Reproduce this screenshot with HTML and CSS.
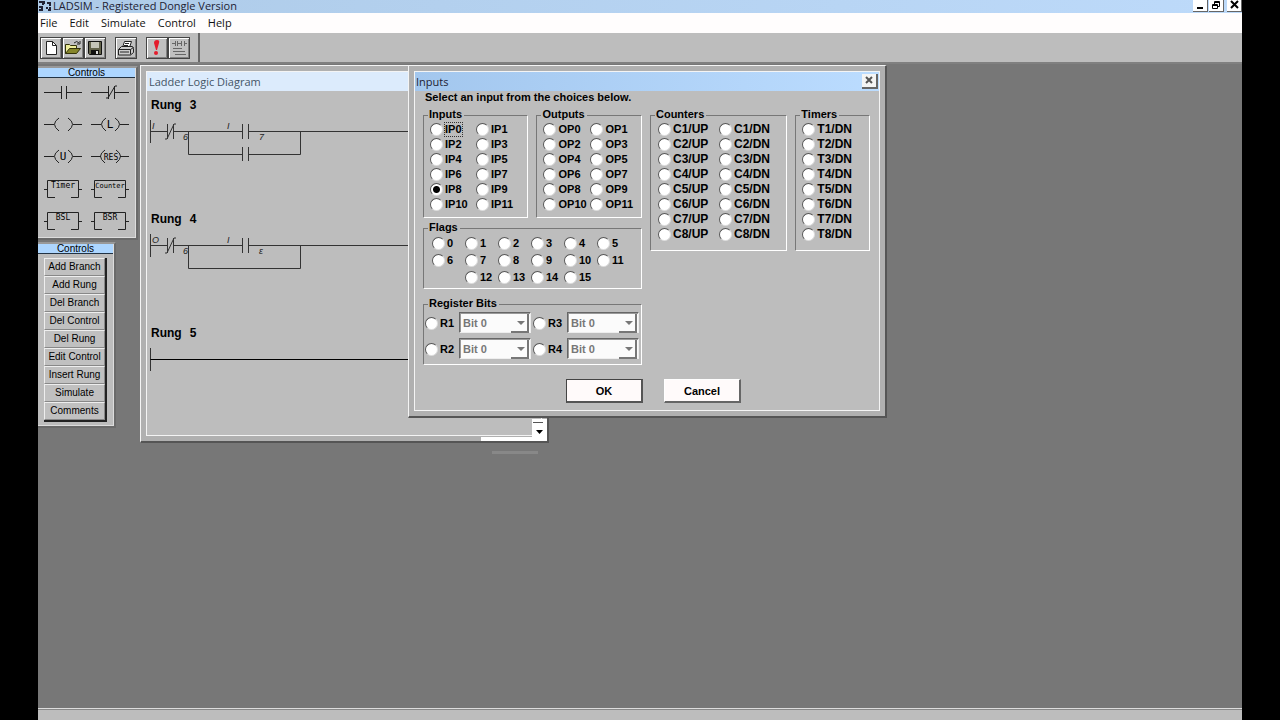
FILE: index.html
```html
<!DOCTYPE html>
<html lang="en">

  <head>
    <meta charset="UTF-8">
    <title>LADSIM - Registered Dongle Version</title>
    <link rel="stylesheet" href="styles.css">
  </head>

  <body>
    <header class="titlebar">
      <svg class="appIcon" width="14" height="12" viewBox="0 0 14 12"><path d="M1 2h4v3M1 7h3v3H1M9 3h3v3M8 8h2M12 7v3h-2M6 1v3" fill="none" stroke="#223" stroke-width="2"/></svg>
      <span class="appTitle">LADSIM - Registered Dongle Version</span>
      <div class="winButtons">
	<button type="button" aria-label="Minimize"><svg width="15" height="11" viewBox="0 2 15 11"><path d="M4 10h6" stroke="#000" stroke-width="2"/></svg></button>
	<button type="button" aria-label="Restore"><svg width="15" height="11" viewBox="0 2 15 11"><path d="M5.500 6V3.500h5v5H9M3.500 6.500h5v4h-5zM5 4.500h6M3 7.500h6" fill="none" stroke="#000"/></svg></button>
	<button type="button" class="closeApp" aria-label="Close"><svg width="15" height="11" viewBox="0 2 15 11"><path d="M4 3l7 7M11 3l-7 7" stroke="#000" stroke-width="2"/></svg></button>
      </div>
    </header>
    <nav class="menubar">
      <a href="#">File</a><a href="#">Edit</a><a href="#">Simulate</a><a href="#">Control</a><a href="#">Help</a>
    </nav>
    <div class="toolbar">
      <div class="tools">
	<button type="button" aria-label="New"><svg width="18" height="18" viewBox="0 0 18 18"><path d="M4.500 2.500h6l4 4v9h-10z" fill="#fff" stroke="#222"/><path d="M10.500 2.500v4h4" fill="none" stroke="#222"/></svg></button>
	<button type="button" aria-label="Open"><svg width="18" height="18" viewBox="0 0 18 18"><path d="M1.500 14.500v-9h4l1 1h6v3" fill="#eded9a" stroke="#33330a"/><path d="M1.500 14.500l4-5h11l-4 5z" fill="#85852a" stroke="#33330a"/><path d="M10 4q3-3 5 0M16 2v3h-3" fill="none" stroke="#222"/></svg></button>
	<button type="button" aria-label="Save"><svg width="18" height="18" viewBox="0 0 18 18"><path d="M2.500 2.500h13v13h-12l-1-1z" fill="#62624a" stroke="#111"/><path d="M5 3h8v6H5z" fill="#c4c4b8"/><path d="M5 11h8v4H5z" fill="#111"/><path d="M10 12h2v3h-2z" fill="#ddd"/></svg></button>
	<button type="button" class="gap" aria-label="Print"><svg width="18" height="18" viewBox="0 0 18 18"><path d="M5.500 8.500l2-6h7l-2 6z" fill="#fff" stroke="#222"/><path d="M1.500 10.500l3-3h11l1 2v4l-3 2.500h-12z" fill="#ccc" stroke="#222"/><path d="M1.500 10.500h12v5M13.500 10.500l3-2M3 13h9M8 4.500h4M7 6.500h4" fill="none" stroke="#222"/></svg></button>
	<button type="button" class="gap" aria-label="Run"><svg width="18" height="18" viewBox="0 0 18 18"><path d="M6 4q0-3 3-3t2 3l-2 7H8z" fill="#e51c2c"/><circle cx="8" cy="14" r="2" fill="#e51c2c"/></svg></button>
	<button type="button" aria-label="Rung list"><svg width="18" height="18" viewBox="0 0 18 18"><path d="M2 4.500h3M5.500 2v5M7.500 2v5M8 4.500h3M11.500 2v5M14.500 2v5M15 4.500h2M3 9.500h9M3 12.500h12M5 15.500h11" fill="none" stroke="#666"/></svg></button>
      </div>
    </div>

    <main class="workspace">
      <section class="palette symbols">
	<h2 class="paletteTitle">Controls</h2>
	<div class="symbolGrid">
	  <button type="button" aria-label="Open contact"><svg width="40" height="28" viewBox="0 0 40 28"><path d="M1 14.500h17M23 14.500h16M18.500 8v13M23.500 8v13"/></svg></button>
	  <button type="button" aria-label="Closed contact"><svg width="40" height="28" viewBox="0 0 40 28"><path d="M1 14.500h17M24 14.500h15M18.500 8v13M24.500 8v13M16 20h2L25 8h2"/></svg></button>
	  <button type="button" aria-label="Coil"><svg width="40" height="28" viewBox="0 0 40 28"><path d="M1 14.500h10M30 14.500h9M16 8q-9 6 0 13M25 8q9 6 0 13"/></svg></button>
	  <button type="button" aria-label="Latch"><svg width="40" height="28" viewBox="0 0 40 28"><path d="M1 14.500h10M30 14.500h9M16 8q-9 6 0 13M25 8q9 6 0 13"/><text x="20" y="18" class="big">L</text></svg></button>
	  <button type="button" aria-label="Unlatch"><svg width="40" height="28" viewBox="0 0 40 28"><path d="M1 14.500h10M30 14.500h9M16 8q-9 6 0 13M25 8q9 6 0 13"/><text x="20" y="18" class="big">U</text></svg></button>
	  <button type="button" aria-label="Reset"><svg width="40" height="28" viewBox="0 0 40 28"><path d="M1 14.500h10M30 14.500h9M15 8q-9 6 0 13M26 8q9 6 0 13"/><text x="21" y="18">RES</text></svg></button>
	  <button type="button" aria-label="Timer"><svg width="40" height="28" viewBox="0 0 40 28"><path d="M12 23.500H4.500v-17h31v17H28M1 15.500h3M36 15.500h3"/><text x="20" y="14">Timer</text></svg></button>
	  <button type="button" aria-label="Counter"><svg width="40" height="28" viewBox="0 0 40 28"><path d="M12 23.500H4.500v-17h31v17H28M1 15.500h3M36 15.500h3"/><text x="20" y="14" class="narrow">Counter</text></svg></button>
	  <button type="button" aria-label="Shift left"><svg width="40" height="28" viewBox="0 0 40 28"><path d="M12 23.500H4.500v-17h31v17H28M1 15.500h3M36 15.500h3"/><text x="20" y="14">BSL</text></svg></button>
	  <button type="button" aria-label="Shift right"><svg width="40" height="28" viewBox="0 0 40 28"><path d="M12 23.500H4.500v-17h31v17H28M1 15.500h3M36 15.500h3"/><text x="20" y="14">BSR</text></svg></button>
	</div>
      </section>

      <section class="palette commands">
	<h2 class="paletteTitle">Controls</h2>
	<div class="commandList">
	  <button type="button">Add Branch</button>
	  <button type="button">Add Rung</button>
	  <button type="button">Del Branch</button>
	  <button type="button">Del Control</button>
	  <button type="button">Del Rung</button>
	  <button type="button">Edit Control</button>
	  <button type="button">Insert Rung</button>
	  <button type="button">Simulate</button>
	  <button type="button">Comments</button>
	</div>
      </section>

      <section class="window ladder">
	<div class="windowInner">
	  <h2 class="windowTitle pale">Ladder Logic Diagram</h2>
	  <div class="rungs">
	    <div class="rung">
	      <h3>Rung<span>3</span></h3>
	      <svg width="380" height="60" viewBox="0 0 380 60">
		<path d="M2.500 8v23M2.500 19.500h17M26 19.500h69M101 19.500h279M19.500 12v15M25.500 12v15M17 27h2l7-15h2M94.500 12v15M100.500 12v15M40.500 20v22.500h54M101 42.500h51.500V20M94.500 35v14M100.500 35v14"/>
		<text x="4" y="17">I</text><text x="35" y="28">6</text><text x="79" y="17">I</text><text x="111" y="28">7</text>
	      </svg>
	    </div>
	    <div class="rung">
	      <h3>Rung<span>4</span></h3>
	      <svg width="380" height="60" viewBox="0 0 380 60">
		<path d="M2.500 8v23M2.500 19.500h17M26 19.500h69M101 19.500h279M19.500 12v15M25.500 12v15M17 27h2l7-15h2M94.500 12v15M100.500 12v15M40.500 20v22.500h112V20"/>
		<text x="4" y="17">O</text><text x="35" y="28">6</text><text x="79" y="17">I</text><text x="111" y="28">&#949;</text>
	      </svg>
	    </div>
	    <div class="rung">
	      <h3>Rung<span>5</span></h3>
	      <svg width="380" height="60" viewBox="0 0 380 60"><path d="M2.500 8v23"/><path class="live" d="M2.500 19.500h378"/></svg>
	    </div>
	  </div>
	</div>
	<div class="scrollCorner"></div>
	<button type="button" class="scrollDown" aria-label="Scroll down"><svg width="15" height="20" viewBox="0 0 15 20"><path d="M1 3.500h10" stroke="#555"/><path d="M4 11h7l-3.500 4z" fill="#000"/></svg></button>
      </section>
      <div class="ghostBar"></div>

      <section class="window dialog">
	<div class="windowInner">
	  <h2 class="windowTitle">Inputs
	    <button type="button" class="closeDialog" aria-label="Close"><svg width="14" height="13" viewBox="0 0 14 13"><path d="M4 3l6 6M10 3l-6 6" stroke="#555" stroke-width="2"/></svg></button>
	  </h2>
	  <form class="dialogBody">
	    <p class="prompt">Select an input from the choices below.</p>
	    <div class="groups">
	      <div class="leftGroups">
		<div class="ioGroups">
		  <fieldset>
		    <legend>Inputs</legend>
		    <div class="choices inputs">
		      <label class="focused"><input type="radio" name="source"><span>IP0</span></label>
		      <label><input type="radio" name="source"><span>IP1</span></label>
		      <label><input type="radio" name="source"><span>IP2</span></label>
		      <label><input type="radio" name="source"><span>IP3</span></label>
		      <label><input type="radio" name="source"><span>IP4</span></label>
		      <label><input type="radio" name="source"><span>IP5</span></label>
		      <label><input type="radio" name="source"><span>IP6</span></label>
		      <label><input type="radio" name="source"><span>IP7</span></label>
		      <label><input type="radio" name="source" checked><span>IP8</span></label>
		      <label><input type="radio" name="source"><span>IP9</span></label>
		      <label><input type="radio" name="source"><span>IP10</span></label>
		      <label><input type="radio" name="source"><span>IP11</span></label>
		    </div>
		  </fieldset>
		  <fieldset>
		    <legend>Outputs</legend>
		    <div class="choices outputs">
		      <label><input type="radio" name="source"><span>OP0</span></label>
		      <label><input type="radio" name="source"><span>OP1</span></label>
		      <label><input type="radio" name="source"><span>OP2</span></label>
		      <label><input type="radio" name="source"><span>OP3</span></label>
		      <label><input type="radio" name="source"><span>OP4</span></label>
		      <label><input type="radio" name="source"><span>OP5</span></label>
		      <label><input type="radio" name="source"><span>OP6</span></label>
		      <label><input type="radio" name="source"><span>OP7</span></label>
		      <label><input type="radio" name="source"><span>OP8</span></label>
		      <label><input type="radio" name="source"><span>OP9</span></label>
		      <label><input type="radio" name="source"><span>OP10</span></label>
		      <label><input type="radio" name="source"><span>OP11</span></label>
		    </div>
		  </fieldset>
		</div>
		<fieldset class="flagGroup">
		  <legend>Flags</legend>
		  <div class="choices flags">
		    <label><input type="radio" name="source"><span>0</span></label>
		    <label><input type="radio" name="source"><span>1</span></label>
		    <label><input type="radio" name="source"><span>2</span></label>
		    <label><input type="radio" name="source"><span>3</span></label>
		    <label><input type="radio" name="source"><span>4</span></label>
		    <label><input type="radio" name="source"><span>5</span></label>
		    <label><input type="radio" name="source"><span>6</span></label>
		    <label><input type="radio" name="source"><span>7</span></label>
		    <label><input type="radio" name="source"><span>8</span></label>
		    <label><input type="radio" name="source"><span>9</span></label>
		    <label><input type="radio" name="source"><span>10</span></label>
		    <label><input type="radio" name="source"><span>11</span></label>
		    <label class="lastRow"><input type="radio" name="source"><span>12</span></label>
		    <label><input type="radio" name="source"><span>13</span></label>
		    <label><input type="radio" name="source"><span>14</span></label>
		    <label><input type="radio" name="source"><span>15</span></label>
		  </div>
		</fieldset>
		<fieldset class="registerGroup">
		  <legend>Register Bits</legend>
		  <div class="registers">
		    <label><input type="radio" name="source"><span>R1</span></label>
		    <div class="combo"><select disabled aria-label="R1 bit"><option>Bit 0</option></select></div>
		    <label><input type="radio" name="source"><span>R3</span></label>
		    <div class="combo"><select disabled aria-label="R3 bit"><option>Bit 0</option></select></div>
		    <label><input type="radio" name="source"><span>R2</span></label>
		    <div class="combo"><select disabled aria-label="R2 bit"><option>Bit 0</option></select></div>
		    <label><input type="radio" name="source"><span>R4</span></label>
		    <div class="combo"><select disabled aria-label="R4 bit"><option>Bit 0</option></select></div>
		  </div>
		</fieldset>
	      </div>
	      <fieldset>
		<legend>Counters</legend>
		<div class="choices counters">
		  <label><input type="radio" name="source"><span>C1/UP</span></label>
		  <label><input type="radio" name="source"><span>C1/DN</span></label>
		  <label><input type="radio" name="source"><span>C2/UP</span></label>
		  <label><input type="radio" name="source"><span>C2/DN</span></label>
		  <label><input type="radio" name="source"><span>C3/UP</span></label>
		  <label><input type="radio" name="source"><span>C3/DN</span></label>
		  <label><input type="radio" name="source"><span>C4/UP</span></label>
		  <label><input type="radio" name="source"><span>C4/DN</span></label>
		  <label><input type="radio" name="source"><span>C5/UP</span></label>
		  <label><input type="radio" name="source"><span>C5/DN</span></label>
		  <label><input type="radio" name="source"><span>C6/UP</span></label>
		  <label><input type="radio" name="source"><span>C6/DN</span></label>
		  <label><input type="radio" name="source"><span>C7/UP</span></label>
		  <label><input type="radio" name="source"><span>C7/DN</span></label>
		  <label><input type="radio" name="source"><span>C8/UP</span></label>
		  <label><input type="radio" name="source"><span>C8/DN</span></label>
		</div>
	      </fieldset>
	      <fieldset>
		<legend>Timers</legend>
		<div class="choices timers">
		  <label><input type="radio" name="source"><span>T1/DN</span></label>
		  <label><input type="radio" name="source"><span>T2/DN</span></label>
		  <label><input type="radio" name="source"><span>T3/DN</span></label>
		  <label><input type="radio" name="source"><span>T4/DN</span></label>
		  <label><input type="radio" name="source"><span>T5/DN</span></label>
		  <label><input type="radio" name="source"><span>T6/DN</span></label>
		  <label><input type="radio" name="source"><span>T7/DN</span></label>
		  <label><input type="radio" name="source"><span>T8/DN</span></label>
		</div>
	      </fieldset>
	    </div>
	    <div class="dialogButtons">
	      <button type="button" class="default">OK</button>
	      <button type="button">Cancel</button>
	    </div>
	  </form>
	</div>
      </section>
    </main>
    <footer class="statusbar"></footer>
  </body>

</html>
```
FILE: styles.css
```css
* {
    box-sizing: border-box;
}
html {
    background-color: #000;
}
body {
    display: flex;
    flex-direction: column;
    height: 100vh;
    margin: 0 38px;
    background-color: #777;
    color: #000;
    font-family: "Liberation Sans", Arial, sans-serif;
    font-size: 11px;
    overflow: hidden;
}
h2, h3, p {
    margin: 0;
}
button {
    padding: 0;
    border: 0;
    background: none;
    color: inherit;
    font: inherit;
}
svg {
    display: block;
}

/* application frame */
.titlebar {
    display: flex;
    align-items: flex-start;
    height: 13px;
    background: linear-gradient(90deg, #aecbe8, #bddafa);
}
.appIcon {
    margin-right: 1px;
}
.appTitle {
    color: #223;
    font: 11px/11px "Open Sans", sans-serif;
}
.winButtons {
    display: flex;
    gap: 1px;
    margin-left: auto;
}
.winButtons button {
    width: 15px;
    background-color: #fff;
    border-right: 1px solid #666;
    border-bottom: 1px solid #666;
}
.winButtons .closeApp {
    margin-left: 2px;
}
.menubar {
    display: flex;
    gap: 12px;
    height: 20px;
    padding-left: 2px;
    background-color: #fffdfd;
    font: 11px/19px "Open Sans", sans-serif;
}
.menubar a {
    color: #111;
    text-decoration: none;
}
.toolbar {
    height: 31px;
    background-color: #bdbdbd;
    border-bottom: 2px solid #808080;
}
.tools {
    display: flex;
    align-items: center;
    width: 162px;
    height: 29px;
    padding-left: 2px;
    border-right: 2px solid #666;
}
.tools button {
    width: 22px;
    height: 22px;
    padding: 1px;
    background-color: #c0c0c0;
    border: 1px solid #444;
    box-shadow: inset 1px 1px #fff, inset -1px -1px #808080;
}
.tools .gap {
    margin-left: 9px;
}
.workspace {
    position: relative;
    flex: 1;
    overflow: hidden;
}
.statusbar {
    height: 12px;
    background-color: #bdbdbd;
    border-top: 1px solid #ddd;
    box-shadow: inset 0 1px #888;
}

/* floating palettes */
.palette {
    position: absolute;
    left: 0;
    background-color: #bdbdbd;
    border: 2px solid #6a6a6a;
    border-top-color: #999;
    border-left: 0;
    box-shadow: inset -1px -1px #ddd;
}
.symbols {
    top: 2px;
    width: 100px;
}
.commands {
    top: 178px;
    width: 78px;
}
.paletteTitle {
    height: 10px;
    margin-right: 1px;
    background-color: #add6ff;
    border-bottom: 1px solid #234;
    font-size: 10px;
    font-weight: normal;
    line-height: 10px;
    text-align: center;
}
.symbolGrid {
    display: grid;
    grid-template-columns: 40px 40px;
    gap: 4px 7px;
    padding: 0 0 4px 5px;
}
.symbolGrid path {
    fill: none;
    stroke: #222;
}
.symbolGrid text {
    font: 8px "DejaVu Sans Mono", monospace;
    text-anchor: middle;
}
.symbolGrid .big {
    font-size: 11px;
}
.symbolGrid .narrow {
    font-size: 7px;
}
.commandList {
    display: flex;
    flex-direction: column;
    margin: 4px 7px 4px 6px;
    border-right: 2px solid #222;
    border-bottom: 2px solid #222;
}
.commandList button {
    height: 18px;
    background-color: #c0c0c0;
    border: 1px solid #888;
    border-top-color: #eee;
    border-left-color: #eee;
    font-size: 10px;
    line-height: 16px;
    white-space: nowrap;
}

/* child windows */
.window {
    position: absolute;
    top: 1px;
    padding: 5px;
    background-color: #b0b0b0;
    border: 1px solid #f4f4f4;
    border-right: 2px solid #555;
    border-bottom: 2px solid #555;
}
.windowInner {
    background-color: #bdbdbd;
    border: 1px solid #f4f4f4;
}
.windowTitle {
    display: flex;
    align-items: center;
    justify-content: space-between;
    height: 19px;
    padding: 0 1px;
    background: linear-gradient(90deg, #a3c7ee, #bbdcff);
    color: #223;
    font: 11px/17px "Open Sans", sans-serif;
}
.windowTitle.pale {
    padding-left: 2px;
    background: #dcebfc;
    color: #456;
}
.ladder {
    left: 102px;
    width: 409px;
}
.rungs {
    height: 344px;
    padding: 7px 0 0 1px;
    overflow: hidden;
}
.rung {
    height: 114px;
}
.rung h3 {
    height: 14px;
    padding-left: 3px;
    font-size: 12px;
    line-height: 14px;
}
.rung span {
    margin-left: 8px;
}
.rung path {
    fill: none;
    stroke: #333;
}
.rung .live {
    stroke: #000;
}
.rung text {
    fill: #222;
    font: italic 9px "Liberation Sans", sans-serif;
}
.scrollDown {
    position: absolute;
    right: 0;
    bottom: 2px;
    background-color: #fff;
}
.scrollCorner {
    position: absolute;
    right: 0;
    bottom: 0;
    width: 66px;
    height: 4px;
    background-color: #fff;
}
.ghostBar {
    position: absolute;
    left: 454px;
    top: 387px;
    width: 46px;
    height: 3px;
    background-color: #888;
}

/* input chooser */
.dialog {
    left: 370px;
    width: 479px;
    font-size: 11px;
    font-weight: bold;
}
.closeDialog {
    background-color: #f4f4f4;
    border-right: 2px solid #666;
    border-bottom: 2px solid #666;
}
.dialogBody {
    padding: 0 9px 7px 8px;
}
.prompt {
    padding-left: 2px;
    line-height: 13px;
}
.groups {
    display: flex;
    align-items: flex-start;
    gap: 8px;
    padding-top: 4px;
}
.leftGroups {
    width: 220px;
}
.ioGroups {
    display: grid;
    grid-template-columns: 1fr 1fr;
    gap: 8px;
}
fieldset {
    min-width: 0;
    margin: 0;
    padding: 0;
    border: 1px solid #777;
    border-right-color: #fff;
    border-bottom-color: #fff;
}
legend {
    height: 14px;
    margin-left: 4px;
    padding: 0 2px 0 1px;
    line-height: 13px;
}
.choices {
    display: grid;
    grid-auto-rows: 15px;
}
.choices label, .registers label {
    display: flex;
    align-items: center;
    gap: 2px;
    line-height: 13px;
    white-space: nowrap;
}
input[type="radio"] {
    flex: none;
    width: 13px;
    height: 13px;
    margin: 0;
    appearance: none;
    background-color: #fff;
    border: 1px solid #555;
    border-right-color: #ddd;
    border-bottom-color: #ddd;
    border-radius: 50%;
}
input[type="radio"]:checked {
    background: radial-gradient(circle, #000 3px, #fff 4px);
}
.focused span {
    outline: 1px dotted #333;
}
.inputs {
    grid-template-columns: 46px 58px;
    padding: 0 0 5px 6px;
}
.outputs {
    grid-template-columns: 47px 56px;
    padding: 0 0 5px 6px;
}
.counters, .timers {
    font-size: 12px;
}
.counters {
    grid-template-columns: 61px 68px;
    padding: 0 0 8px 7px;
}
.timers {
    grid-template-columns: 67px;
    padding: 0 0 8px 6px;
}
.flagGroup {
    margin-top: 3px;
}
.flags {
    grid-template-columns: repeat(6, 33px);
    grid-auto-rows: 17px;
    padding: 0 0 2px 8px;
}
.lastRow {
    grid-column: 2;
}
.registerGroup {
    margin-top: 8px;
}
.registers {
    display: grid;
    grid-template-columns: 32px 72px 32px 72px;
    grid-auto-rows: 22px;
    gap: 4px 2px;
    padding: 1px 0 4px 1px;
}
.combo {
    position: relative;
}
.combo select {
    width: 72px;
    height: 21px;
    margin: 0;
    padding: 0 3px;
    appearance: none;
    background-color: #fbfbfb;
    border: 1px solid #666;
    border-right-color: #eee;
    border-bottom-color: #eee;
    border-radius: 0;
    box-shadow: inset 1px 1px #999;
    color: #777;
    font: inherit;
    opacity: 1;
}
.combo::before {
    content: "";
    position: absolute;
    top: 2px;
    right: 2px;
    width: 16px;
    height: 17px;
    border-right: 2px solid #777;
    border-bottom: 2px solid #777;
}
.combo::after {
    content: "";
    position: absolute;
    top: 9px;
    right: 6px;
    border: 4px solid transparent;
    border-top-color: #777;
    border-bottom: 0;
}
.dialogButtons {
    display: flex;
    gap: 21px;
    padding: 14px 0 0 143px;
}
.dialogButtons button {
    width: 77px;
    height: 24px;
    background-color: #fffafa;
    border: 1px solid #fff;
    border-right: 2px solid #666;
    border-bottom: 2px solid #666;
}
.dialogButtons .default {
    border: 1px solid #444;
    border-right: 2px solid #555;
    border-bottom: 2px solid #555;
}
```
